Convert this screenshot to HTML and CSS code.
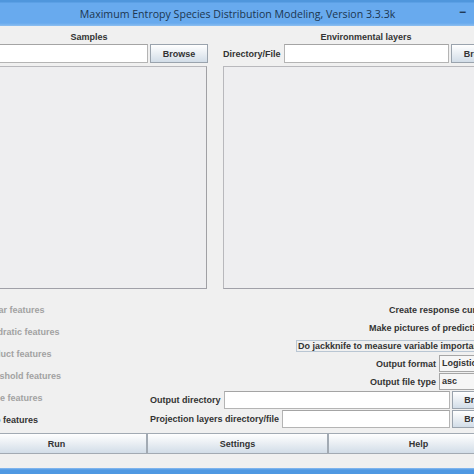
FILE: index.html
```html
<!DOCTYPE html>
<html lang="en">
<head>
    <meta charset="UTF-8">
    <meta name="viewport" content="width=device-width, initial-scale=1.0">
    <title>Maxent</title>
    <link rel="stylesheet" href="styles.css">
</head>
<body>
    <div class="window">
        <div class="titlebar">
            <span class="title">Maximum Entropy Species Distribution Modeling, Version 3.3.3k</span>
            <span class="minimize">&minus;</span>
        </div>

        <div class="top">
            <div class="panel samples">
                <div class="panel-title">Samples</div>
                <div class="row">
                    <input type="text" class="field">
                    <button class="btn browse">Browse</button>
                </div>
                <div class="listbox"></div>
            </div>
            <div class="panel layers">
                <div class="panel-title">Environmental layers</div>
                <div class="row">
                    <span class="label">Directory/File</span>
                    <input type="text" class="field">
                    <button class="btn browse">Browse</button>
                </div>
                <div class="listbox"></div>
            </div>
        </div>

        <div class="middle">
            <div class="features">
                <label class="check disabled"><span class="box"></span>Linear features</label>
                <label class="check disabled"><span class="box"></span>Quadratic features</label>
                <label class="check disabled"><span class="box"></span>Product features</label>
                <label class="check disabled"><span class="box"></span>Threshold features</label>
                <label class="check disabled"><span class="box"></span>Hinge features</label>
                <label class="check"><span class="box"></span>Auto features</label>
            </div>
            <div class="options">
                <div class="opt"><span>Create response curves</span><span class="box"></span></div>
                <div class="opt"><span>Make pictures of predictions</span><span class="box"></span></div>
                <div class="opt"><span class="focus">Do jackknife to measure variable importance</span><span class="box"></span></div>
                <div class="opt combo-row"><span>Output format</span><div class="combo">Logistic</div></div>
                <div class="opt combo-row"><span>Output file type</span><div class="combo">asc</div></div>
                <div class="row file-row">
                    <span class="label">Output directory</span>
                    <input type="text" class="field">
                    <button class="btn browse">Browse</button>
                </div>
                <div class="row file-row">
                    <span class="label">Projection layers directory/file</span>
                    <input type="text" class="field">
                    <button class="btn browse">Browse</button>
                </div>
            </div>
        </div>

        <div class="actions">
            <button class="btn action">Run</button>
            <button class="btn action">Settings</button>
            <button class="btn action">Help</button>
        </div>
        <div class="footer"></div>
    </div>
    <div class="taskbar"></div>
</body>
</html>
```

FILE: styles.css
```css
html, body {
    margin: 0;
    padding: 0;
}

body {
    width: 474px;
    height: 474px;
    overflow: hidden;
    background-color: #f0f0f0;
    font-family: 'Liberation Sans', Arial, sans-serif;
    font-size: 9px;
    font-weight: bold;
    color: #333333;
}

.window {
    width: 543px;
    margin-left: -34px;
    background-color: #f0f0f0;
}

.titlebar {
    height: 26px;
    display: flex;
    align-items: center;
    justify-content: center;
    position: relative;
    background: linear-gradient(#4f96dc 0, #4f96dc 2px, #68aaee 3px, #68aaee 23px, #8dbff0 26px);
}

.title {
    font-family: 'Open Sans', 'Noto Sans', sans-serif;
    font-weight: normal;
    font-size: 10.6px;
    color: #1c3650;
    padding-top: 2px;
}

.minimize {
    position: absolute;
    left: 493px;
    top: 5px;
    font-family: 'Liberation Sans', sans-serif;
    font-size: 12px;
    color: #1c3650;
}

.top {
    display: flex;
    padding: 0 0 0 4px;
    height: 263px;
}

.panel {
    display: flex;
    flex-direction: column;
    min-width: 0;
}

.samples {
    width: 238px;
    flex: none;
}

.layers {
    margin-left: 15px;
    width: 286px;
    flex: none;
}

.panel-title {
    text-align: center;
    height: 18px;
    line-height: 23px;
}

.row {
    display: flex;
    align-items: center;
    height: 19px;
}

.label {
    white-space: nowrap;
    margin-right: 3px;
    flex: none;
}

.field {
    flex: 1 1 0;
    min-width: 0;
    width: 0;
    height: 19px;
    box-sizing: border-box;
    margin: 0 2px 0 0;
    padding: 0;
    border: 1px solid #b4b4b4;
    border-top-color: #a4a4a4;
    background-color: #ffffff;
}

.btn {
    font-family: 'Liberation Sans', Arial, sans-serif;
    font-size: 9px;
    font-weight: bold;
    color: #333333;
    border: 1px solid #9aa3ad;
    background: linear-gradient(#ffffff, #e9eef3 50%, #d2dde8);
    padding: 0;
    margin: 0;
    box-sizing: border-box;
}

.browse {
    width: 58px;
    height: 19px;
    flex: none;
}

.listbox {
    margin-top: 3px;
    height: 223px;
    margin-right: 1px;
    box-sizing: border-box;
    border: 1px solid #b8b8bc;
    border-right-color: #a0a0a4;
    border-bottom-color: #a0a0a8;
    background-color: #eeeef0;
}

.middle {
    display: flex;
    height: 143px;
}

.features {
    width: 184px;
    flex: none;
    padding-top: 10px;
    display: flex;
    flex-direction: column;
}

.check {
    display: flex;
    align-items: center;
    height: 22px;
    white-space: nowrap;
    color: #333333;
}

.check .box {
    margin-left: 0;
    margin-right: 3px;
}

.disabled {
    color: #a2a2a2;
}

.box {
    display: inline-block;
    flex: none;
    width: 11px;
    height: 11px;
    box-sizing: border-box;
    border: 1px solid #8e8f8f;
    background: linear-gradient(#f4f4f4, #ffffff);
}

.options {
    flex: 1;
    min-width: 0;
    padding-top: 12px;
    display: flex;
    flex-direction: column;
}

.opt {
    display: flex;
    justify-content: flex-end;
    align-items: center;
    height: 18px;
    white-space: nowrap;
}

.opt .box {
    margin-left: 4px;
    margin-right: 3px;
}

.focus {
    border: 1px solid #b9c6d3;
    padding: 0 1px;
    line-height: 10px;
}

.combo-row {
    height: 17px;
    margin-bottom: 1px;
}

.combo {
    width: 70px;
    height: 17px;
    box-sizing: border-box;
    margin-left: 3px;
    padding-left: 2px;
    line-height: 15px;
    border: 1px solid #a6a6a6;
    background-color: #f6f6f6;
}

.file-row {
    height: 18px;
    margin-bottom: 1px;
}

.file-row .field {
    height: 18px;
}

.file-row .browse {
    width: 57px;
    height: 18px;
}

.actions {
    display: flex;
    height: 21px;
    margin-top: 1px;
}

.action {
    flex: 1;
    height: 21px;
    border-color: #a2aab3;
}

.footer {
    height: 14px;
}

.taskbar {
    height: 8px;
    background: linear-gradient(#8dbdf0, #4f98e2 2px);
}
```
